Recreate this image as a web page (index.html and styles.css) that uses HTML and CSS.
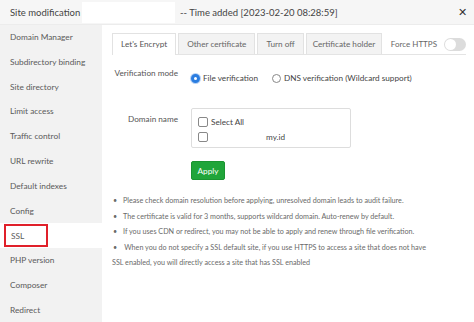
FILE: index.html
```html
<!DOCTYPE html>
<html lang="en">
<head>
    <meta charset="UTF-8">
    <title>Site modification</title>
<link rel="stylesheet" href="styles.css">
</head>
<body>
    <div class="dialog">
        <div class="dialog-title">
            <span class="title-text">Site modification</span>
            <span class="title-mask"></span>
            <span class="title-time">-- Time added [2023-02-20 08:28:59]</span>
            <span class="close">&#x2715;</span>
        </div>
        <div class="dialog-body">
            <ul class="side-menu">
                <li>Domain Manager</li>
                <li>Subdirectory binding</li>
                <li>Site directory</li>
                <li>Limit access</li>
                <li>Traffic control</li>
                <li>URL rewrite</li>
                <li>Default indexes</li>
                <li>Config</li>
                <li class="active"><span class="mark">SSL</span></li>
                <li>PHP version</li>
                <li>Composer</li>
                <li>Redirect</li>
            </ul>
            <div class="content">
                <div class="tab-bar">
                    <div class="tab on">Let's Encrypt</div>
                    <div class="tab">Other certificate</div>
                    <div class="tab">Turn off</div>
                    <div class="tab">Certificate holder</div>
                    <div class="force">
                        <span>Force HTTPS</span>
                        <span class="switch"><i></i></span>
                    </div>
                </div>

                <div class="form-row mode-row">
                    <label class="form-label">Verification mode</label>
                    <div class="radios">
                        <span class="radio checked"></span><span class="radio-text">File verification</span>
                        <span class="radio"></span><span class="radio-text">DNS verification (Wildcard support)</span>
                    </div>
                </div>

                <div class="form-row domain-row">
                    <label class="form-label">Domain name</label>
                    <div class="domain-box">
                        <div class="check-line"><span class="checkbox"></span>Select All</div>
                        <div class="check-line"><span class="checkbox"></span><span class="domain">my.id</span></div>
                    </div>
                </div>

                <div class="form-row">
                    <span class="form-label"></span>
                    <button class="btn-apply">Apply</button>
                </div>

                <ul class="notes">
                    <li>Please check domain resolution before applying, unresolved domain leads to audit failure.</li>
                    <li>The certificate is valid for 3 months, supports wildcard domain. Auto-renew by default.</li>
                    <li>If you uses CDN or redirect, you may not be able to apply and renew through file verification.</li>
                    <li class="wrap">When you do not specify a SSL default site, if you use HTTPS to access a site that does not have SSL enabled, you will directly access a site that has SSL enabled</li>
                </ul>
            </div>
        </div>
    </div>
</body>
</html>
```

FILE: styles.css
```css
*{
    padding:0;
    margin:0;
    box-sizing:border-box;
}
body{
    width:474px;
    height:322px;
    overflow:hidden;
    background:#fff;
    font-family:Lato,"Liberation Sans",sans-serif;
    color:#555;
}
.dialog-title{
    height:25px;
    display:flex;
    align-items:center;
    background:#f6f6f6;
    border-bottom:1px solid #ececec;
    font-size:9.5px;
    color:#444;
    padding-left:10px;
}
.title-text{
    width:72px;
}
.title-mask{
    width:93px;
    height:21px;
    background:#fff;
}
.title-time{
    margin-left:5px;
}
.close{
    margin-left:auto;
    margin-right:7px;
    font-size:11px;
    color:#333;
}
.dialog-body{
    display:flex;
}
.side-menu{
    list-style:none;
    width:102px;
    flex-shrink:0;
    height:297px;
    background:#f2f2f2;
    font-size:8.3px;
    color:#5a5a5a;
}
.side-menu li{
    height:24.8px;
    line-height:24.8px;
    padding-left:10px;
    white-space:nowrap;
}
.side-menu li.active{
    background:#fff;
    padding-left:4px;
    display:flex;
    align-items:center;
}
.side-menu .mark{
    display:block;
    width:44px;
    height:23px;
    line-height:20px;
    padding-left:5px;
    border:2px solid #e0202a;
}
.content{
    flex:1;
    min-width:0;
    padding:9px 8px 0 10px;
    font-size:8.2px;
}
.tab-bar{
    display:flex;
    align-items:flex-end;
    height:21px;
    border-bottom:1px solid #e4e4e4;
    white-space:nowrap;
}
.tab{
    height:21px;
    line-height:20px;
    padding:0 8px;
    margin-right:2px;
    border:1px solid #e2e2e2;
    border-bottom:none;
    background:#f3f3f3;
    color:#666;
    font-size:8.2px;
}
.tab.on{
    background:#fff;
    height:22px;
    margin-bottom:-1px;
    color:#555;
}
.tab:nth-child(4){
    padding:0 6px;
}
.force{
    margin-left:auto;
    align-self:center;
    display:flex;
    align-items:center;
    color:#666;
    font-size:8px;
}
.switch{
    width:22px;
    height:13px;
    margin-left:7px;
    border-radius:7px;
    background:#dcdcdc;
    display:flex;
    align-items:center;
    padding-left:1px;
}
.switch i{
    width:11px;
    height:11px;
    border-radius:50%;
    background:#fff;
}
.form-row{
    display:flex;
    white-space:nowrap;
}
.form-label{
    width:66px;
    text-align:right;
    margin-right:13px;
    flex-shrink:0;
}
.mode-row{
    margin-top:12px;
    height:36px;
}
.mode-row .form-label{
    line-height:13px;
}
.radios{
    display:flex;
    align-items:center;
    height:12px;
    margin-top:5px;
}
.radio{
    width:9px;
    height:9px;
    border-radius:50%;
    border:1px solid #888;
    margin-right:3px;
}
.radio.checked{
    border:3px solid #2b7de0;
    background:#fff;
    box-shadow:0 0 0 1px #b7d2f5;
}
.radio-text{
    margin-right:14px;
    color:#444;
}
.domain-row{
    margin-top:5px;
    height:53px;
}
.domain-row .form-label{
    padding-top:6px;
}
.domain-box{
    width:160px;
    height:40px;
    border:1px solid #ddd;
    border-radius:2px;
    padding:5px 0 0 6px;
}
.check-line{
    display:flex;
    align-items:center;
    height:15px;
    color:#444;
}
.checkbox{
    width:10px;
    height:10px;
    border:1px solid #888;
    border-radius:2px;
    margin-right:3px;
}
.domain{
    margin-left:55px;
}
.btn-apply{
    width:34px;
    height:19px;
    background:#20a53a;
    color:#fff;
    border:1px solid #1a9431;
    border-radius:2px;
    font-family:inherit;
    font-size:8.2px;
}
.notes{
    list-style:none;
    margin-top:13px;
    font-size:7.2px;
    color:#6a6a6a;
    line-height:15.5px;
    width:322px;
}
.notes li{
    padding-left:11px;
    position:relative;
}
.notes li::before{
    content:"\2022";
    position:absolute;
    left:1px;
}
.notes li.wrap{
    padding-left:0;
}
.notes li.wrap::before{
    position:static;
    margin-right:7px;
    margin-left:1px;
}
```
